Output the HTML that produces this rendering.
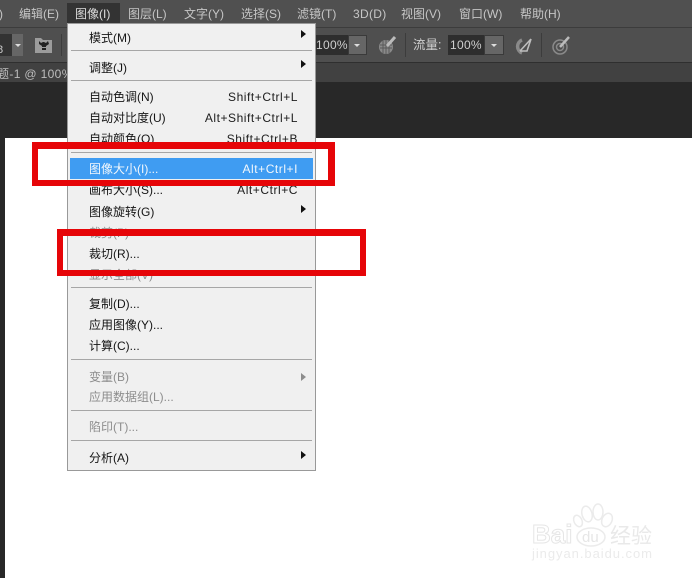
<!DOCTYPE html>
<html><head><meta charset="utf-8"><style>
html,body{margin:0;padding:0;width:692px;height:578px;overflow:hidden;background:#fff}
body{position:relative;font-family:"Liberation Sans","Noto Sans CJK SC",sans-serif}
div,span{position:absolute;white-space:nowrap}
.m{top:5px;height:18px;line-height:18px;font-size:12px;color:#c6c6c6}
.i{left:89px;height:18px;line-height:18px;font-size:12px;color:#151515;margin-top:1px}
.s{right:394px;height:18px;line-height:18px;font-size:12px;color:#1c1c1c;letter-spacing:.55px;margin-top:1px}
.d{color:#8d8d8d}
.l{left:71px;width:241px;height:1px;background:#a6a6a6}
.a{left:301px;width:0;height:0;border-left:5px solid #111;border-top:4px solid transparent;border-bottom:4px solid transparent}
.r{box-sizing:border-box;border-style:solid;border-color:#e60508}
.t{color:#cfcfcf;font-size:12px;line-height:16px;height:16px}
</style></head><body>
<div style="left:0;top:0;width:692px;height:27px;background:#505050"></div>
<div style="left:0;top:27px;width:692px;height:1px;background:#3c3c3c"></div>
<div style="left:0;top:28px;width:692px;height:34px;background:#4f4f4f"></div>
<div style="left:0;top:62px;width:692px;height:1px;background:#2f2f2f"></div>
<div style="left:0;top:63px;width:692px;height:19px;background:#414141"></div>
<div style="left:0;top:82px;width:692px;height:56px;background:#282828"></div>
<div style="left:0;top:138px;width:5px;height:440px;background:#282828"></div>

<div class="m" style="left:-1px">)</div>
<div class="m" style="left:19px">编辑(E)</div>
<div style="left:67px;top:3px;width:53px;height:20px;background:#333"></div>
<div class="m" style="left:75px;color:#ddd">图像(I)</div>
<div class="m" style="left:128px">图层(L)</div>
<div class="m" style="left:184px">文字(Y)</div>
<div class="m" style="left:241px">选择(S)</div>
<div class="m" style="left:297px">滤镜(T)</div>
<div class="m" style="left:353px;letter-spacing:.3px">3D(D)</div>
<div class="m" style="left:401px">视图(V)</div>
<div class="m" style="left:459px">窗口(W)</div>
<div class="m" style="left:520px">帮助(H)</div>

<div style="left:0;top:34px;width:12px;height:22px;background:#333"></div>
<div class="t" style="left:-3px;top:42px;font-size:11px">8</div>
<div style="left:12px;top:34px;width:11px;height:22px;background:#666"></div>
<div style="left:15px;top:44px;border-top:3px solid #ddd;border-left:3px solid transparent;border-right:3px solid transparent"></div>
<svg style="position:absolute;left:35px;top:36px" width="17" height="17"><path d="M0 2h6l2 2h9v13H0z" fill="#9c9c9c"/><path d="M4 5l2 2 2-1 1 0 2 1 2-2 1 3-3 2v4H7v-4L4 8z" fill="#222"/><path d="M6 11h5v1H6z" fill="#9c9c9c"/></svg>
<div style="left:61px;top:34px;width:1px;height:22px;background:#3c3c3c"></div>

<div style="left:316px;top:35px;width:32px;height:20px;background:#2e2e2e"></div>
<div class="t" style="left:316px;top:37px;letter-spacing:.3px">100%</div>
<div style="left:348px;top:35px;width:19px;height:20px;background:#666;box-sizing:border-box;border:1px solid #3a3a3a"></div>
<div style="left:354px;top:44px;border-top:3px solid #ddd;border-left:3px solid transparent;border-right:3px solid transparent"></div>
<svg style="position:absolute;left:377px;top:34px" width="22" height="22"><circle cx="9" cy="13" r="7" fill="#8a8a8a"/><path d="M3 11h12M3 14h12M6 7v12M9 6v14M12 7v12" stroke="#5a5a5a"/><path d="M10 12L18 3" stroke="#bbb" stroke-width="3"/></svg>
<div style="left:405px;top:33px;width:1px;height:24px;background:#3c3c3c"></div>
<div class="t" style="left:413px;top:37px;font-size:12.5px">流量:</div>
<div style="left:448px;top:35px;width:36px;height:20px;background:#2e2e2e"></div>
<div class="t" style="left:450px;top:37px;letter-spacing:.3px">100%</div>
<div style="left:484px;top:35px;width:20px;height:20px;background:#666;box-sizing:border-box;border:1px solid #3a3a3a"></div>
<div style="left:491px;top:44px;border-top:3px solid #ddd;border-left:3px solid transparent;border-right:3px solid transparent"></div>
<svg style="position:absolute;left:513px;top:34px" width="22" height="22"><path d="M9 6a7 7 0 0 0 0 13" fill="none" stroke="#8a8a8a" stroke-width="3.5"/><path d="M7 17L18 5M7 17h7L18 5" fill="none" stroke="#bdbdbd" stroke-width="1.6"/></svg>
<div style="left:541px;top:33px;width:1px;height:24px;background:#3c3c3c"></div>
<svg style="position:absolute;left:551px;top:34px" width="22" height="22"><circle cx="9" cy="13" r="7" fill="none" stroke="#8a8a8a" stroke-width="1.5"/><circle cx="9" cy="13" r="3.5" fill="none" stroke="#8a8a8a" stroke-width="1.5"/><path d="M9 13L18 3" stroke="#bbb" stroke-width="2.5"/></svg>
<div class="t" style="left:-3px;top:66px;color:#bdbdbd;letter-spacing:.35px">题-1 @ 100%(</div>

<div style="left:67px;top:23px;width:247px;height:446px;background:#f0f0f0;border:1px solid #999"></div>

<div class="i" style="top:28px">模式(M)</div><div class="a" style="top:30px"></div>
<div class="l" style="top:50px"></div>
<div class="i" style="top:58px">调整(J)</div><div class="a" style="top:60px"></div>
<div class="l" style="top:80px"></div>
<div class="i" style="top:87px">自动色调(N)</div><div class="s" style="top:87px">Shift+Ctrl+L</div>
<div class="i" style="top:108px">自动对比度(U)</div><div class="s" style="top:108px">Alt+Shift+Ctrl+L</div>
<div class="i" style="top:129px">自动颜色(O)</div><div class="s" style="top:129px">Shift+Ctrl+B</div>
<div class="l" style="top:152px"></div>
<div style="left:70px;top:158px;width:243px;height:21px;background:#3f9cf2"></div>
<div class="i" style="top:159px;color:#f2f7fc">图像大小(I)...</div><div class="s" style="top:159px;color:#f2f7fc">Alt+Ctrl+I</div>
<div class="i" style="top:180px">画布大小(S)...</div><div class="s" style="top:180px">Alt+Ctrl+C</div>
<div class="i" style="top:202px">图像旋转(G)</div><div class="a" style="top:205px"></div>
<div class="i d" style="top:223px">裁剪(P)</div>
<div class="i" style="top:244px">裁切(R)...</div>
<div class="i d" style="top:265px">显示全部(V)</div>
<div class="l" style="top:287px"></div>
<div class="i" style="top:294px">复制(D)...</div>
<div class="i" style="top:315px">应用图像(Y)...</div>
<div class="i" style="top:336px">计算(C)...</div>
<div class="l" style="top:359px"></div>
<div class="i d" style="top:367px">变量(B)</div><div class="a" style="top:373px;border-left-color:#8d8d8d"></div>
<div class="i d" style="top:387px">应用数据组(L)...</div>
<div class="l" style="top:410px"></div>
<div class="i d" style="top:417px">陷印(T)...</div>
<div class="l" style="top:440px"></div>
<div class="i" style="top:448px">分析(A)</div><div class="a" style="top:451px"></div>

<div class="r" style="left:32px;top:142px;width:303px;height:44px;border-width:7px 7px 6px 6px"></div>
<div class="r" style="left:57px;top:229px;width:309px;height:47px;border-width:7px 6px 6px 6px"></div>

<svg style="position:absolute;left:530px;top:500px" width="130" height="70">
<g fill="#fff" stroke="#ebebeb" stroke-width="1.5">
<ellipse cx="57" cy="14" rx="5" ry="8" transform="rotate(-15 57 14)"/><ellipse cx="68" cy="12" rx="5" ry="8"/><ellipse cx="77" cy="20" rx="5" ry="7" transform="rotate(25 77 20)"/><ellipse cx="48" cy="21" rx="4" ry="6" transform="rotate(-25 48 21)"/>
<ellipse cx="61" cy="37" rx="14" ry="9"/></g>
<text x="2" y="43" font-family="Liberation Sans,sans-serif" font-size="26" font-weight="bold" fill="#fff" stroke="#e6e6e6" stroke-width="1">Bai</text>
<text x="52" y="42" font-family="Liberation Sans,sans-serif" font-size="15" fill="#e6e6e6">du</text>
<text x="80" y="43" font-family="Noto Sans CJK SC,sans-serif" font-size="21" fill="#e9e9e9">经验</text>
<text x="2" y="58" font-family="Liberation Sans,sans-serif" font-size="13" fill="#ebebeb" letter-spacing=".95">jingyan.baidu.com</text>
</svg>
</body></html>
